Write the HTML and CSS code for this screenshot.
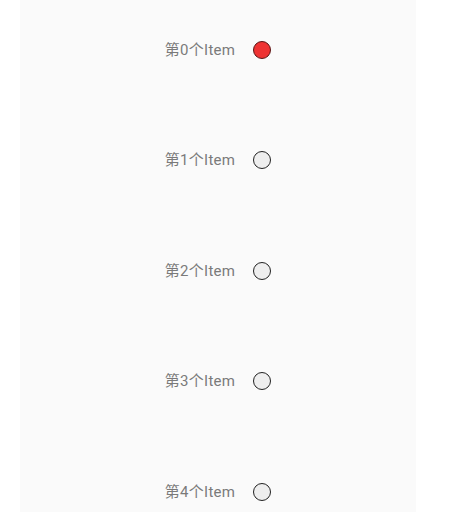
FILE: index.html
```html
<!DOCTYPE html>
<html lang="zh">
<head>
    <meta charset="UTF-8">
    <meta name="viewport" content="width=device-width, initial-scale=1.0">
    <title>Item list</title>
    <link rel="stylesheet" href="styles.css">
</head>
<body>
<div class="panel">
    <div class="item">
        <span class="label">第0个Item</span>
        <span class="radio checked"></span>
    </div>
    <div class="item">
        <span class="label">第1个Item</span>
        <span class="radio"></span>
    </div>
    <div class="item">
        <span class="label">第2个Item</span>
        <span class="radio"></span>
    </div>
    <div class="item">
        <span class="label">第3个Item</span>
        <span class="radio"></span>
    </div>
    <div class="item">
        <span class="label">第4个Item</span>
        <span class="radio"></span>
    </div>
</div>
</body>
</html>
```

FILE: styles.css
```css
html, body {
    margin: 0;
    height: 100%;
}
body {
    background-color: #ffffff;
    font-family: Roboto, "Noto Sans CJK SC", sans-serif;
}
.panel {
    margin-left: 20px;
    width: 396px;
    min-height: 100%;
    background-color: #fafafa;
    display: flex;
    flex-direction: column;
    align-items: center;
    gap: 92.5px;
    padding-top: 40.5px;
    box-sizing: border-box;
}
.item {
    display: flex;
    align-items: center;
    height: 18px;
    gap: 18px;
}
.label {
    font-size: 15px;
    letter-spacing: 0.3px;
    color: #7a7a7a;
    line-height: 18px;
}
.radio {
    width: 18px;
    height: 18px;
    border-radius: 50%;
    border: 1.7px solid #222222;
    background-color: #eeeeee;
    box-sizing: border-box;
}
.radio.checked {
    background-color: #ee3333;
    border-color: #5a1616;
}
```
